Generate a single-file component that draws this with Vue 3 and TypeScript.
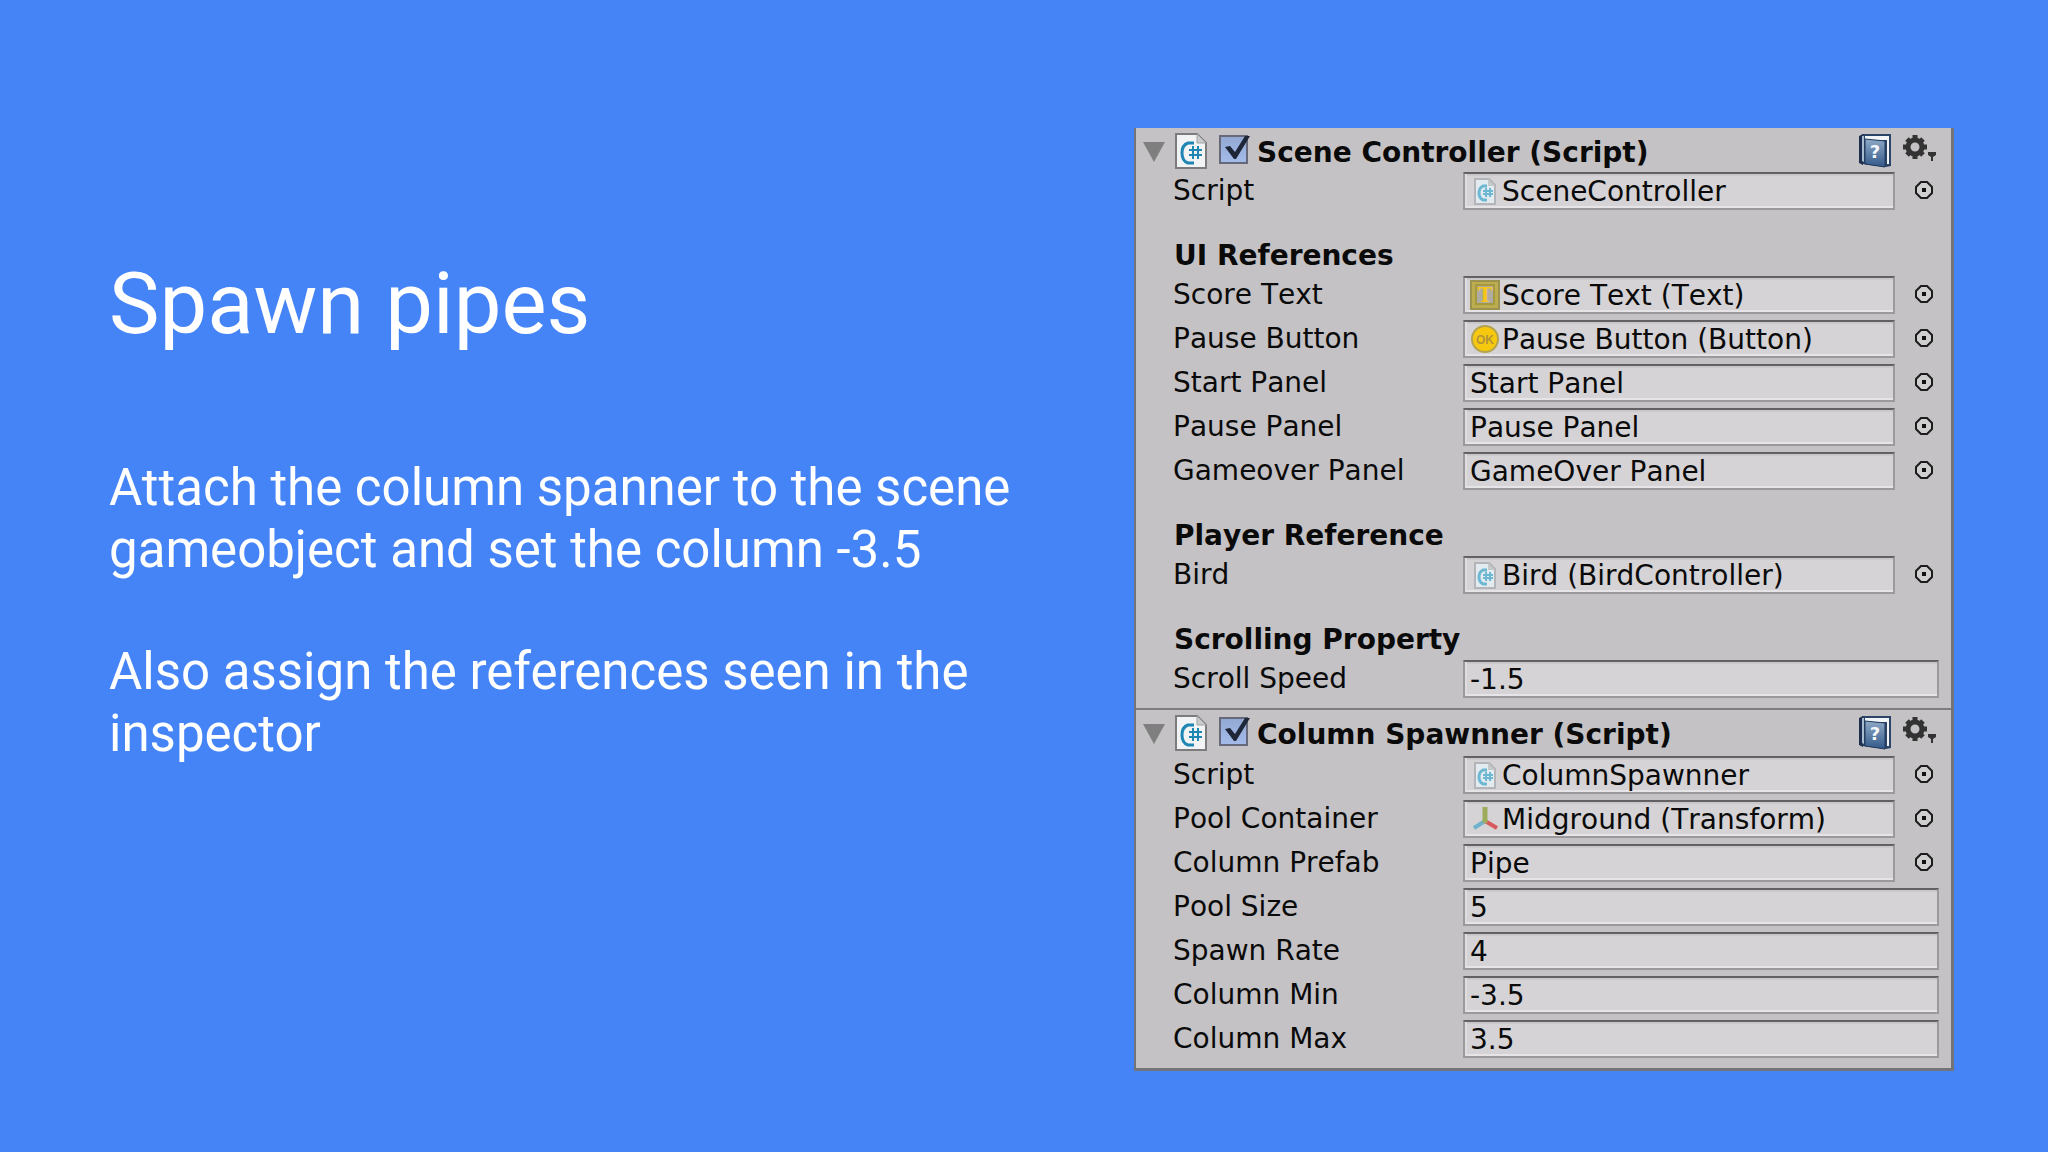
<script setup lang="ts">
import { reactive } from 'vue'

type FieldIcon = 'script' | 'text' | 'button' | 'transform'

interface Field {
  id: string
  label: string
  value: string
  icon?: FieldIcon
  picker?: boolean
}

interface Group {
  heading?: string
  fields: Field[]
}

interface Component {
  id: string
  title: string
  enabled: boolean
  groups: Group[]
}

const components = reactive<Component[]>([
  {
    id: 'scene-controller',
    title: 'Scene Controller (Script)',
    enabled: true,
    groups: [
      {
        fields: [
          { id: 'scene-script', label: 'Script', value: 'SceneController', icon: 'script', picker: true },
        ],
      },
      {
        heading: 'UI References',
        fields: [
          { id: 'score-text', label: 'Score Text', value: 'Score Text (Text)', icon: 'text', picker: true },
          { id: 'pause-button', label: 'Pause Button', value: 'Pause Button (Button)', icon: 'button', picker: true },
          { id: 'start-panel', label: 'Start Panel', value: 'Start Panel', picker: true },
          { id: 'pause-panel', label: 'Pause Panel', value: 'Pause Panel', picker: true },
          { id: 'gameover-panel', label: 'Gameover Panel', value: 'GameOver Panel', picker: true },
        ],
      },
      {
        heading: 'Player Reference',
        fields: [
          { id: 'bird', label: 'Bird', value: 'Bird (BirdController)', icon: 'script', picker: true },
        ],
      },
      {
        heading: 'Scrolling Property',
        fields: [{ id: 'scroll-speed', label: 'Scroll Speed', value: '-1.5' }],
      },
    ],
  },
  {
    id: 'column-spawner',
    title: 'Column Spawnner (Script)',
    enabled: true,
    groups: [
      {
        fields: [
          { id: 'column-script', label: 'Script', value: 'ColumnSpawnner', icon: 'script', picker: true },
          { id: 'pool-container', label: 'Pool Container', value: 'Midground (Transform)', icon: 'transform', picker: true },
          { id: 'column-prefab', label: 'Column Prefab', value: 'Pipe', picker: true },
          { id: 'pool-size', label: 'Pool Size', value: '5' },
          { id: 'spawn-rate', label: 'Spawn Rate', value: '4' },
          { id: 'column-min', label: 'Column Min', value: '-3.5' },
          { id: 'column-max', label: 'Column Max', value: '3.5' },
        ],
      },
    ],
  },
])
</script>

<template>
  <main class="slide">
    <section class="copy">
      <h1>Spawn pipes</h1>
      <p>Attach the column spanner to the scene gameobject and set the column -3.5</p>
      <p>Also assign the references seen in the inspector</p>
    </section>

    <section class="inspector" aria-label="Inspector">
      <article v-for="c in components" :key="c.id" class="component">
        <header class="head">
          <button class="fold" type="button" aria-label="Collapse component">
            <svg width="22" height="20" viewBox="0 0 22 20"><path d="M0 0H22L11 20Z" fill="#7f7f7f" /></svg>
          </button>
          <svg class="script-icon" width="32" height="36" viewBox="0 0 32 36" aria-hidden="true">
            <path d="M1 1H22L31 10V35H1Z" fill="#f1f3f4" stroke="#7c7c7c" stroke-width="2" />
            <path d="M22 1V10H31Z" fill="#c9cbcb" stroke="#a3a3a3" />
            <g fill="none" stroke="#1f86b4">
              <path d="M19 10H13Q7 12 7 20Q7 28 13 30H19" stroke-width="3" />
              <path d="M18 13V26M23 13V26M14 17H27M14 22H27" stroke-width="2" />
            </g>
          </svg>
          <span class="tick">
            <input :id="c.id" v-model="c.enabled" type="checkbox" />
            <svg v-if="c.enabled" width="32" height="30" viewBox="0 0 32 30" aria-hidden="true">
              <path d="M6 12L11 11L16 17L26 1H31L17 24H15Z" fill="#1e2738" />
            </svg>
          </span>
          <label class="title" :for="c.id">{{ c.title }}</label>
          <button class="tool book" type="button" aria-label="Open reference">
            <svg width="32" height="36" viewBox="0 0 32 36">
              <defs>
                <linearGradient :id="c.id + '-cover'" x1="0" y1="0" x2="0" y2="1">
                  <stop offset="0" stop-color="#8ea9c6" />
                  <stop offset="1" stop-color="#33598a" />
                </linearGradient>
              </defs>
              <path d="M3 1H32V33L27 34L3 31Z" fill="#2b4468" />
              <path d="M0 3L4 1V32L0 30Z" fill="#1d2f4c" />
              <path d="M6 3H30V31H28V7H6Z" fill="#f2f5f8" />
              <path d="M3 3H5V29L3 28Z" fill="#a9bdd2" />
              <path d="M6 6L26 8V34L6 31Z" :fill="'url(#' + c.id + '-cover)'" stroke="#20395c" />
              <text x="16" y="25" text-anchor="middle" class="logo-help">?</text>
            </svg>
          </button>
          <button class="tool gear" type="button" aria-label="Component options">
            <svg width="34" height="28" viewBox="0 0 34 28">
              <path
                d="M12 0V5M12 19V24M0 12H5M19 12H24M4 4L8 8M16 16L20 20M20 4L16 8M4 20L8 16"
                stroke="#333"
                stroke-width="5"
              />
              <circle cx="12" cy="12" r="7" fill="none" stroke="#333" stroke-width="5" />
              <path d="M25 17H33V20L30 22V26H28V22L25 20Z" fill="#333" />
            </svg>
          </button>
        </header>

        <div v-for="(g, i) in c.groups" :key="i" class="group">
          <h2 v-if="g.heading">{{ g.heading }}</h2>
          <div class="rows">
            <div v-for="f in g.fields" :key="f.id" class="row">
              <label :for="f.id">{{ f.label }}</label>
              <div class="field">
                <svg v-if="f.icon === 'script'" class="glyph" width="30" height="30" viewBox="0 0 30 30" aria-hidden="true">
                  <path d="M5 3H19L25 9V28H5Z" fill="#e2ebef" stroke="#b3b5b8" stroke-width="2" />
                  <path d="M18 3V10H25Z" fill="#c6c8ca" />
                  <g fill="none" stroke="#6db7d3">
                    <path d="M17 10H13Q9 12 9 17Q9 22 13 24H17" stroke-width="3" />
                    <path d="M16 12V21M20 12V21M13 15H23M13 18H23" stroke-width="2" />
                  </g>
                </svg>
                <svg v-else-if="f.icon === 'text'" class="glyph" width="30" height="30" viewBox="0 0 30 30" aria-hidden="true">
                  <rect x="1" y="1" width="28" height="28" fill="#bcae50" stroke="#9c9250" stroke-width="2" />
                  <rect x="6" y="5" width="18" height="19" fill="#aeaaa4" stroke="#a6983f" stroke-width="2" />
                  <text x="15" y="22" text-anchor="middle" class="mini-t">T</text>
                </svg>
                <svg v-else-if="f.icon === 'button'" class="glyph" width="30" height="30" viewBox="0 0 30 30" aria-hidden="true">
                  <circle cx="15" cy="15" r="13" fill="#f6c90e" stroke="#b4a452" stroke-width="2" />
                  <text x="15" y="20" text-anchor="middle" class="mini-ok">OK</text>
                </svg>
                <svg v-else-if="f.icon === 'transform'" class="glyph" width="30" height="30" viewBox="0 0 30 30" aria-hidden="true">
                  <path d="M15 17L4 24" stroke="#6fb2cb" stroke-width="4" />
                  <path d="M15 17L27 24" stroke="#d9585c" stroke-width="4" />
                  <path d="M15 3V19" stroke="#9dab5c" stroke-width="5" />
                </svg>
                <input :id="f.id" v-model="f.value" type="text" />
              </div>
              <button v-if="f.picker" class="picker" type="button" :aria-label="'Select ' + f.label">
                <svg width="18" height="18" viewBox="0 0 18 18">
                  <path d="M6 1H12L17 6V12L12 17H6L1 12V6Z" fill="#cfcfcf" stroke="#1c1c1c" stroke-width="2" />
                  <rect x="7" y="7" width="4" height="4" fill="#111" />
                </svg>
              </button>
            </div>
          </div>
        </div>
      </article>
    </section>
  </main>
</template>

<style>
body {
  margin: 0;
  background: #4584f6;
}
</style>

<style scoped>
.slide {
  box-sizing: border-box;
  min-height: 100vh;
  display: grid;
  grid-template-columns: minmax(0, 5fr) minmax(0, 4fr);
  align-items: start;
  padding: 128px 94px 80px 109px;
  background: #4584f6;
}

.copy {
  padding-top: 126px;
  color: #fff;
  font-family: Roboto, sans-serif;
}

.copy h1 {
  margin: 0 0 103px;
  font-size: 85px;
  line-height: 100px;
  font-weight: 400;
}

.copy p {
  margin: 0 0 60px;
  padding-right: 40px;
  font-size: 51px;
  line-height: 62px;
}

.inspector {
  border: solid #727478;
  border-width: 0 3px 3px 2px;
  background: #c4c2c4;
  color: #0a0a0a;
  font-family: "DejaVu Sans", Verdana, sans-serif;
  font-size: 28px;
  font-kerning: none;
}

.component {
  padding-bottom: 10px;
}

.head {
  display: flex;
  align-items: flex-start;
  height: 39px;
  padding: 5px 14px 0 7px;
}

.component + .component .head {
  height: 41px;
  border-top: 2px solid #7d7d7d;
}

button {
  display: flex;
  padding: 0;
  border: 0;
  background: none;
}

svg {
  display: block;
}

.fold {
  margin: 9px 10px 0 0;
}

.tick {
  position: relative;
  width: 29px;
  height: 29px;
  margin: 2px 9px 0 12px;
}

.tick input {
  appearance: none;
  box-sizing: border-box;
  display: block;
  width: 29px;
  height: 29px;
  margin: 0;
  border: 2px solid #66697a;
  background: linear-gradient(#93a9d4, #a4bbea);
}

.tick svg {
  position: absolute;
  top: 0;
  left: 0;
  pointer-events: none;
}

.title {
  flex: 1;
  line-height: 40px;
  font-weight: 700;
  white-space: nowrap;
}

.gear {
  margin: 2px 0 0 12px;
}

.group h2 {
  margin: 0;
  padding: 27px 0 1px 38px;
  font-size: 28px;
  line-height: 38px;
  font-weight: 700;
}

.rows {
  display: flex;
  flex-direction: column;
  gap: 6px;
}

.row {
  display: flex;
  align-items: center;
  padding: 0 12px 0 37px;
}

.row > label {
  flex: none;
  width: 290px;
  line-height: 38px;
  white-space: nowrap;
}

.field {
  flex: 1;
  min-width: 0;
  box-sizing: border-box;
  display: flex;
  align-items: center;
  height: 38px;
  padding-left: 5px;
  border: 2px solid #9b999b;
  border-top-color: #626062;
  background: #d5d3d5;
  box-shadow: inset 2px 0 #dfdddf, inset 0 -2px #e6e4e6, inset 0 2px #cac8ca;
}

.glyph {
  flex: none;
  margin-right: 2px;
}

.field input {
  flex: 1;
  min-width: 0;
  height: 34px;
  padding: 0;
  border: 0;
  outline: 0;
  background: none;
  color: inherit;
  font: inherit;
  font-kerning: none;
}

.picker {
  margin: 0 6px 0 20px;
}

.picker svg {
  margin-bottom: 2px;
}

.logo-help {
  font: 700 18px "DejaVu Sans", sans-serif;
  fill: #f4f7fa;
}

.mini-t {
  font: 700 20px "DejaVu Serif", serif;
  fill: #f5c518;
}

.mini-ok {
  font: 700 12px "Liberation Sans", sans-serif;
  fill: #b3943a;
}
</style>
